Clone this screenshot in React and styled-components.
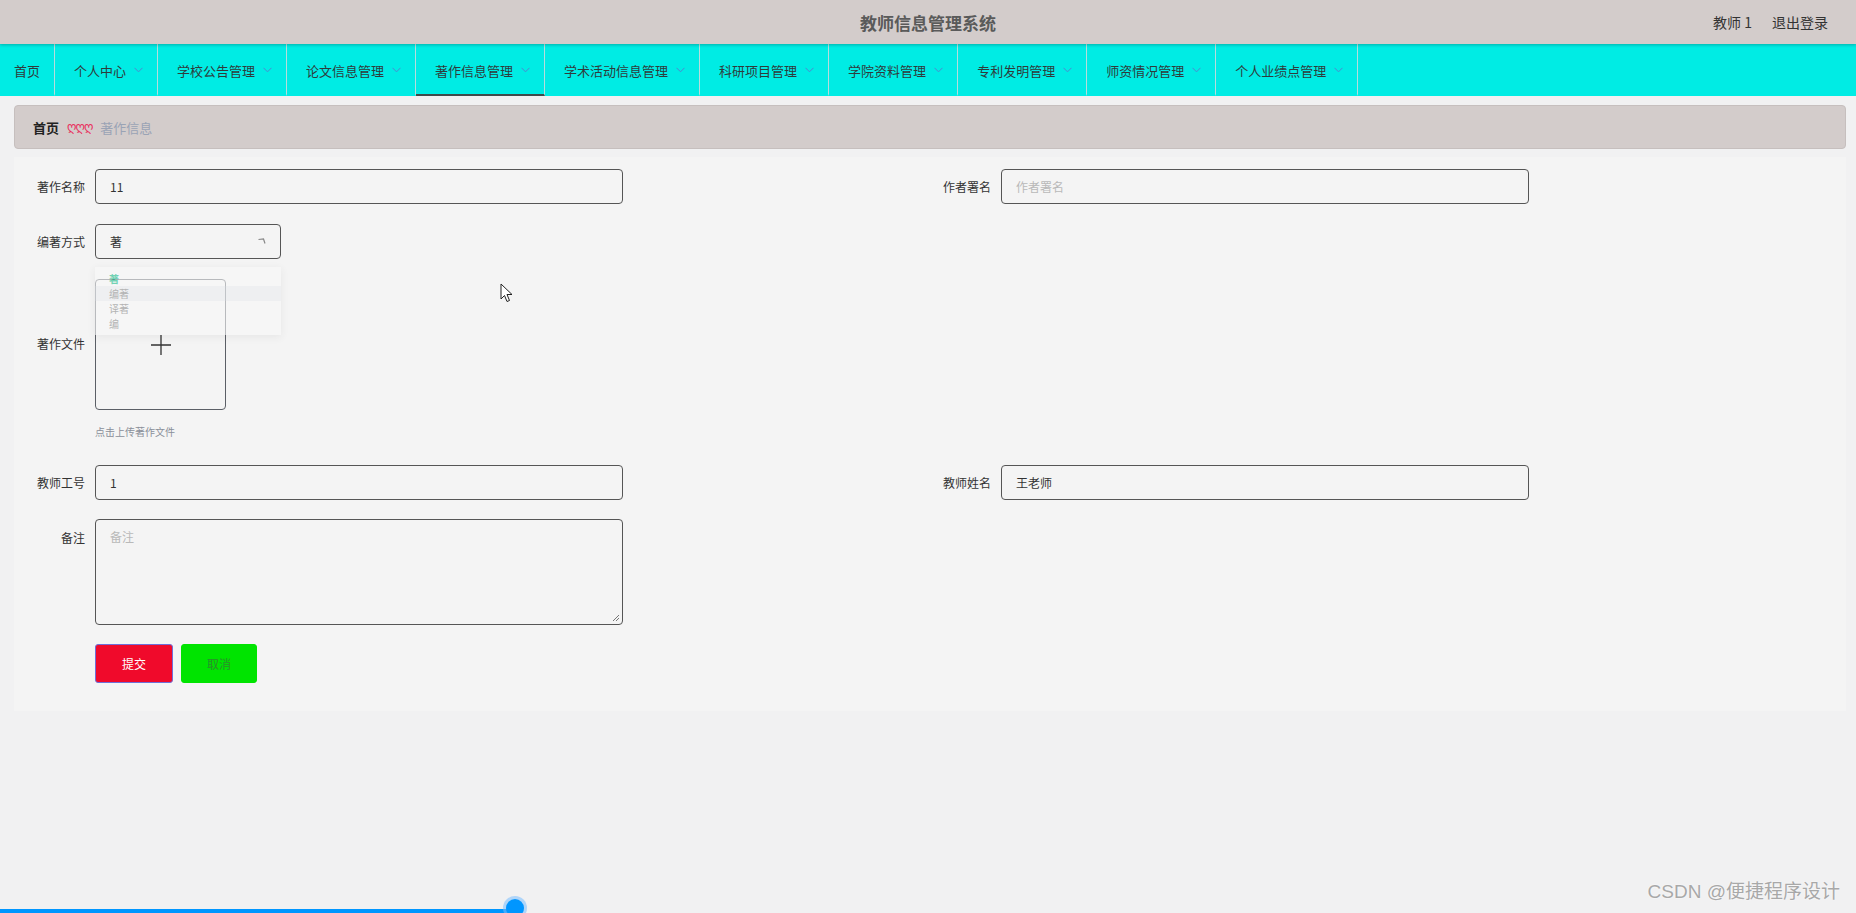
import React from 'react';
import styled, { createGlobalStyle } from 'styled-components';

const GlobalStyle = createGlobalStyle`
  html, body {
    margin: 0;
    padding: 0;
    background: #efeff0;
    font-family: "Noto Sans CJK SC", "Noto Sans", "Liberation Sans", sans-serif;
    color: #333;
  }
  * { box-sizing: border-box; }
`

const Page = styled.div`
  position: relative;
  width: 1856px;
  height: 913px;
  overflow: hidden;
  background: #f1f1f2;
`
const Header = styled.header`
  height: 44px;
  background: #d3cccb;
  display: flex;
  align-items: center;
  justify-content: center;
  position: relative;
  box-shadow: 0 1px 3px rgba(0, 0, 0, 0.25);
  z-index: 2;
`
const Title = styled.div`
  font-size: 17px;
  font-weight: 700;
  color: #5a5a5a;
`
const UserBox = styled.div`
  position: absolute;
  right: 28px;
  top: 0;
  height: 44px;
  display: flex;
  align-items: center;
  gap: 20px;
  font-size: 14px;
  color: #333;
`
const Nav = styled.nav`
  height: 52px;
  background: #00ece4;
  display: flex;
`
const NavItem = styled.div`
  height: 52px;
  padding: 2px ${p => (p.$first ? '14px' : '14px')} 0 ${p => (p.$first ? '14px' : '19px')};
  display: flex;
  align-items: center;
  gap: 8px;
  font-size: 13px;
  color: #2f3b3b;
  border-right: 1px solid #b8dcdc;
  border-bottom: 2px solid ${p => (p.$active ? '#3f4a4a' : 'transparent')};
`
const Chevron = () => (
  <svg width="9" height="6" viewBox="0 0 9 6">
    <path d="M0.5 0.8 L4.5 4.8 L8.5 0.8" fill="none" stroke="#4f86d0" strokeWidth="1" />
  </svg>
)
const Content = styled.div`
  padding: 9px 10px 0 14px;
`
const Crumbs = styled.div`
  height: 44px;
  background: #d3cccb;
  border: 1px solid #c6bfbe;
  border-radius: 4px;
  display: flex;
  align-items: center;
  padding-left: 18px;
  gap: 8px;
  font-size: 13px;
`
const CrumbHome = styled.span`
  font-weight: 700;
  color: #222;
`
const CrumbSep = styled.span`
  color: #e8305e;
  font-size: 12px;
  letter-spacing: -1px;
  font-family: "DejaVu Sans", sans-serif;
`
const CrumbNow = styled.span`
  color: #9aa3b5;
`
const FormCard = styled.div`
  margin-top: 8px;
  background: #f4f4f4;
  padding: 12px 10px 28px 10px;
  position: relative;
`
const Row = styled.div`
  display: grid;
  grid-template-columns: 1fr 1fr;
  margin-bottom: ${p => p.$gap ?? 20}px;
`
const Field = styled.div`
  display: flex;
  align-items: ${p => (p.$top ? 'flex-start' : 'center')};
  gap: 10px;
`
const Label = styled.label`
  width: 61px;
  text-align: right;
  font-size: 12px;
  color: #333;
  flex-shrink: 0;
  padding-top: ${p => p.$pad || 0}px;
`
const Input = styled.div`
  width: ${p => p.$w || 528}px;
  height: 35px;
  border: 1px solid #555;
  border-radius: 4px;
  background: #f4f4f4;
  display: flex;
  align-items: center;
  justify-content: space-between;
  padding: 0 14px;
  font-size: 12px;
  color: ${p => (p.$placeholder ? '#b9b9b9' : '#333')};
`
const TextArea = styled(Input)`
  height: 106px;
  align-items: flex-start;
  padding-top: 8px;
  position: relative;
`
const Grip = styled.svg`
  position: absolute;
  right: 2px;
  bottom: 2px;
`
const SelectWrap = styled.div`
  position: relative;
`
const Dropdown = styled.ul`
  position: absolute;
  left: 0;
  top: 43px;
  width: 186px;
  margin: 0;
  padding: 4px 0;
  list-style: none;
  background: rgba(248, 248, 248, 0.85);
  box-shadow: 0 2px 8px rgba(0, 0, 0, 0.08);
  z-index: 5;
  opacity: 0.7;
`
const Option = styled.li`
  height: 15px;
  line-height: 15px;
  padding-left: 14px;
  font-size: 10px;
  color: ${p => (p.$selected ? '#3cc49a' : '#999')};
  background: ${p => (p.$hover ? '#eceef1' : 'transparent')};
  font-weight: ${p => (p.$selected ? 700 : 400)};
`
const UploadBlock = styled.div`
  display: flex;
  flex-direction: column;
  gap: 14px;
`
const UploadBox = styled.div`
  width: 131px;
  height: 131px;
  border: 1px solid #5b5f66;
  border-radius: 4px;
  display: flex;
  align-items: center;
  justify-content: center;
`
const Hint = styled.div`
  font-size: 10px;
  color: #8a8f99;
`
const Buttons = styled.div`
  display: flex;
  gap: 8px;
  padding-left: 71px;
`
const Btn = styled.button`
  height: 39px;
  width: ${p => p.$w}px;
  border-radius: 3px;
  border: 1px solid ${p => p.$border};
  background: ${p => p.$bg};
  color: ${p => p.$color};
  font-size: 12px;
  font-family: inherit;
`
const Progress = styled.div`
  position: absolute;
  left: 0;
  bottom: 0;
  width: 515px;
  height: 4px;
  background: #0096ff;
`
const Knob = styled.div`
  position: absolute;
  left: 506px;
  bottom: -4px;
  width: 18px;
  height: 18px;
  border-radius: 50%;
  background: #0096ff;
  box-shadow: 0 0 0 3px rgba(120, 190, 255, 0.55);
`
const Watermark = styled.div`
  position: absolute;
  right: 16px;
  bottom: 10px;
  font-size: 19px;
  font-family: "Liberation Sans", "Noto Sans CJK SC", sans-serif;
  color: #a8a8a8;
  text-shadow: 0 0 2px #fff;
`
const Cursor = styled.svg`
  position: absolute;
  left: 500px;
  top: 283px;
`

const navItems = ['个人中心', '学校公告管理', '论文信息管理', '著作信息管理', '学术活动信息管理', '科研项目管理', '学院资料管理', '专利发明管理', '师资情况管理', '个人业绩点管理']

class App extends React.Component {
  render() {
    return (
      <Page>
        <GlobalStyle />
        <Header>
          <Title>教师信息管理系统</Title>
          <UserBox>
            <span>教师 1</span>
            <span>退出登录</span>
          </UserBox>
        </Header>
        <Nav>
          <NavItem $first>首页</NavItem>
          {navItems.map(n => (
            <NavItem key={n} $active={n === '著作信息管理'}>
              {n}
              <Chevron />
            </NavItem>
          ))}
        </Nav>
        <Content>
          <Crumbs>
            <CrumbHome>首页</CrumbHome>
            <CrumbSep>ღღღ</CrumbSep>
            <CrumbNow>著作信息</CrumbNow>
          </Crumbs>
          <FormCard>
            <Row>
              <Field>
                <Label>著作名称</Label>
                <Input>11</Input>
              </Field>
              <Field>
                <Label>作者署名</Label>
                <Input $placeholder>作者署名</Input>
              </Field>
            </Row>
            <Row>
              <Field>
                <Label>编著方式</Label>
                <SelectWrap>
                  <Input $w={186}>
                    著
                    <svg width="8" height="8" viewBox="0 0 8 8">
                      <path d="M0.5 1.5 L5.5 1 L7 5.5" fill="none" stroke="#888" strokeWidth="1.2" />
                    </svg>
                  </Input>
                  <Dropdown>
                    <Option $selected>著</Option>
                    <Option $hover>编著</Option>
                    <Option>译著</Option>
                    <Option>编</Option>
                  </Dropdown>
                </SelectWrap>
              </Field>
            </Row>
            <Row $gap={26}>
              <Field $top>
                <Label $pad={56}>著作文件</Label>
                <UploadBlock>
                  <UploadBox>
                    <svg width="22" height="22" viewBox="0 0 22 22">
                      <path d="M11 1 V21 M1 11 H21" stroke="#333" strokeWidth="1.3" />
                    </svg>
                  </UploadBox>
                  <Hint>点击上传著作文件</Hint>
                </UploadBlock>
              </Field>
            </Row>
            <Row $gap={19}>
              <Field>
                <Label>教师工号</Label>
                <Input>1</Input>
              </Field>
              <Field>
                <Label>教师姓名</Label>
                <Input>王老师</Input>
              </Field>
            </Row>
            <Row $gap={19}>
              <Field $top>
                <Label $pad={10}>备注</Label>
                <TextArea $placeholder>
                  备注
                  <Grip width="9" height="9" viewBox="0 0 9 9">
                    <path d="M8 2 L2 8 M8 5 L5 8" stroke="#777" strokeWidth="1" />
                  </Grip>
                </TextArea>
              </Field>
            </Row>
            <Buttons>
              <Btn $w={78} $bg="#f00a2b" $border="#6f6fd8" $color="#fff">提交</Btn>
              <Btn $w={76} $bg="#00e400" $border="#00e400" $color="#2a8f2a">取消</Btn>
            </Buttons>
          </FormCard>
        </Content>
        <Cursor width="14" height="20" viewBox="0 0 14 20">
          <path d="M1 1 L1 16 L4.5 12.5 L7 18.5 L9.5 17.5 L7 11.5 L12 11.5 Z" fill="#fff" stroke="#222" strokeWidth="1" />
        </Cursor>
        <Watermark>CSDN @便捷程序设计</Watermark>
        <Progress />
        <Knob />
      </Page>
    );
  }
}

export default App;
